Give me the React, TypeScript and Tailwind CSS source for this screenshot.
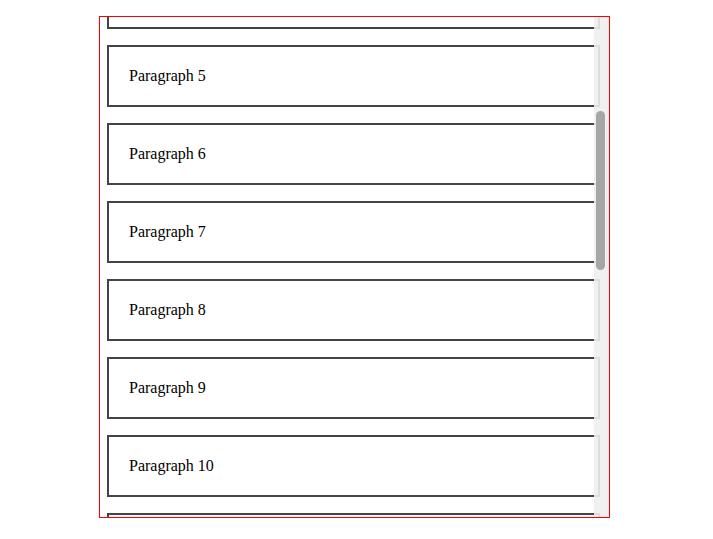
import { useLayoutEffect, useRef } from 'react'

const paragraphs = Array.from({ length: 20 }, (_, i) => `Paragraph ${i + 1}`)

export default function App() {
  const scrollRef = useRef<HTMLDivElement>(null)

  useLayoutEffect(() => {
    if (scrollRef.current) scrollRef.current.scrollTop = 300
  }, [])

  return (
    <div className="w-[713px] h-[539px] bg-white pt-[16px] pl-[99px]">
      <div className="relative w-[511px] h-[502px] border border-[#ff0000]">
        <div
          ref={scrollRef}
          className="h-full overflow-y-scroll [scrollbar-width:none] [&::-webkit-scrollbar]:hidden"
        >
          {paragraphs.map((text) => (
            <p
              key={text}
              className="ml-[7px] my-4 w-[493px] border-2 border-[#444444] p-5 text-[16px] leading-[18px] text-black"
              style={{ fontFamily: '"Liberation Serif", "Times New Roman", serif' }}
            >
              {text}
            </p>
          ))}
        </div>

        {/* overlay scrollbar */}
        <div className="absolute top-0 bottom-0 right-0 w-[15px] bg-[#eeeeee]/90">
          <div className="absolute left-[2px] top-[94px] h-[159px] w-[9px] rounded-full bg-[#a6a6a6]" />
        </div>
      </div>
    </div>
  )
}
